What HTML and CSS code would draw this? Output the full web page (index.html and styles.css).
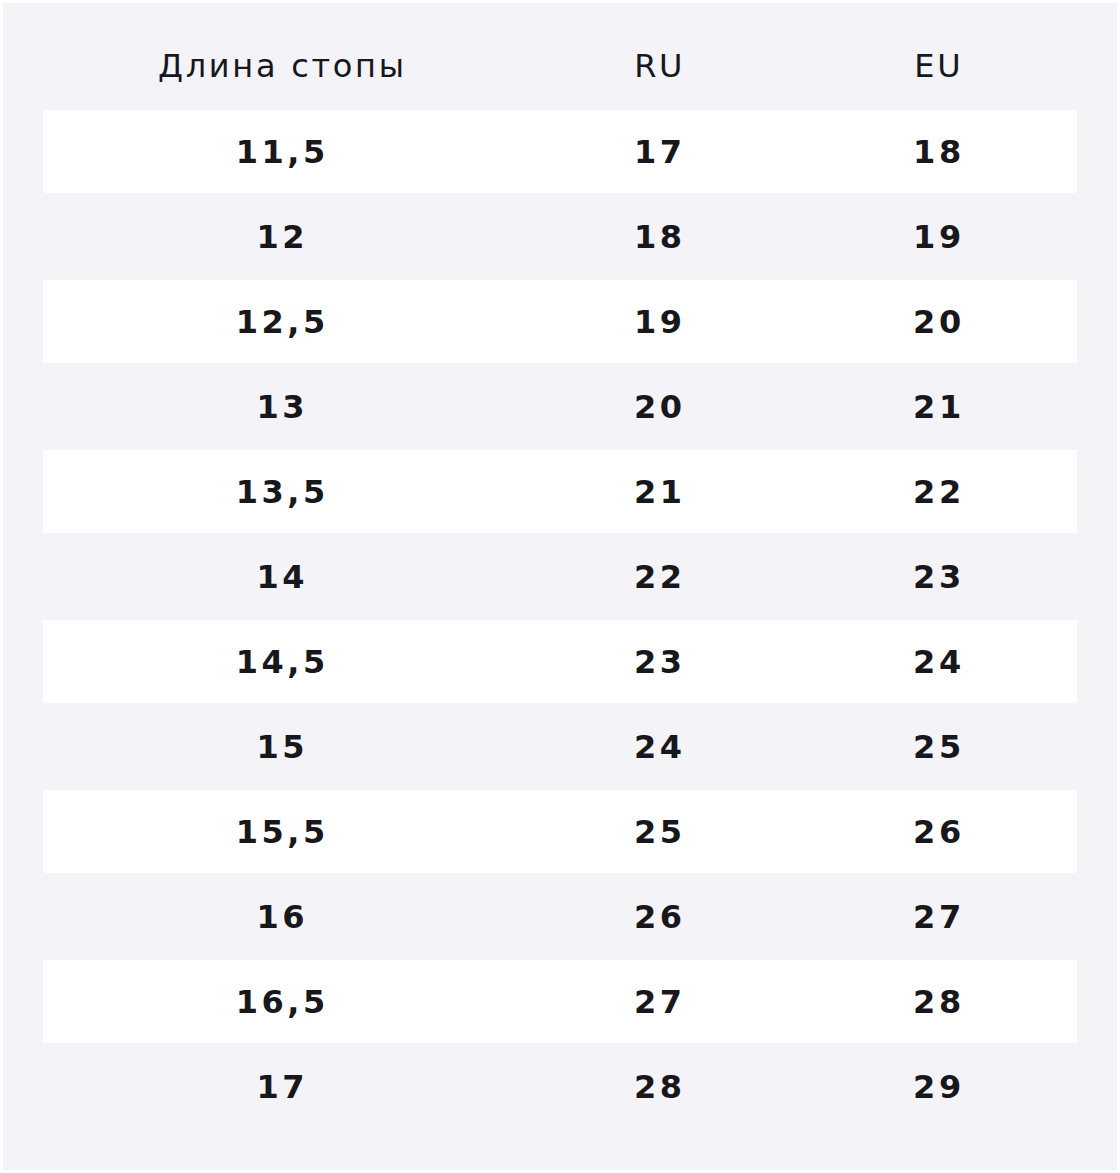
FILE: index.html
```html
<!DOCTYPE html>
<html lang="ru">
<head>
<meta charset="utf-8">
<link rel="stylesheet" href="styles.css">
</head>
<body>
<div class="panel">
  <div class="row head">
    <div class="c c1">Длина стопы</div>
    <div class="c">RU</div>
    <div class="c">EU</div>
  </div>
  <div class="row odd"><div class="c c1">11,5</div><div class="c">17</div><div class="c">18</div></div>
  <div class="row even"><div class="c c1">12</div><div class="c">18</div><div class="c">19</div></div>
  <div class="row odd"><div class="c c1">12,5</div><div class="c">19</div><div class="c">20</div></div>
  <div class="row even"><div class="c c1">13</div><div class="c">20</div><div class="c">21</div></div>
  <div class="row odd"><div class="c c1">13,5</div><div class="c">21</div><div class="c">22</div></div>
  <div class="row even"><div class="c c1">14</div><div class="c">22</div><div class="c">23</div></div>
  <div class="row odd"><div class="c c1">14,5</div><div class="c">23</div><div class="c">24</div></div>
  <div class="row even"><div class="c c1">15</div><div class="c">24</div><div class="c">25</div></div>
  <div class="row odd"><div class="c c1">15,5</div><div class="c">25</div><div class="c">26</div></div>
  <div class="row even"><div class="c c1">16</div><div class="c">26</div><div class="c">27</div></div>
  <div class="row odd"><div class="c c1">16,5</div><div class="c">27</div><div class="c">28</div></div>
  <div class="row even"><div class="c c1">17</div><div class="c">28</div><div class="c">29</div></div>
</div>
</body>
</html>
```
FILE: styles.css
```css
html, body {
  margin: 0;
  padding: 0;
  background: #ffffff;
}
body {
  padding: 3px;
  font-family: "DejaVu Sans", sans-serif;
  color: #17171c;
}
.panel {
  width: 1114px;
  height: 1167px;
  box-sizing: border-box;
  background: #f3f3f8;
  padding: 40px 40px 40px 40px;
}
.row {
  display: grid;
  grid-template-columns: 46% 27% 27%;
  align-items: center;
  font-size: 32px;
  font-weight: bold;
  letter-spacing: 3.5px;
  height: 85px;
}
.row.odd {
  background: #ffffff;
  height: 83px;
}
.row.even {
  height: 87px;
}
.row.head {
  font-weight: normal;
  letter-spacing: 2.7px;
  height: 67px;
  padding-bottom: 22px;
  box-sizing: border-box;
}
.c {
  text-align: center;
  line-height: 40px;
  padding-left: 3px;
}
```
